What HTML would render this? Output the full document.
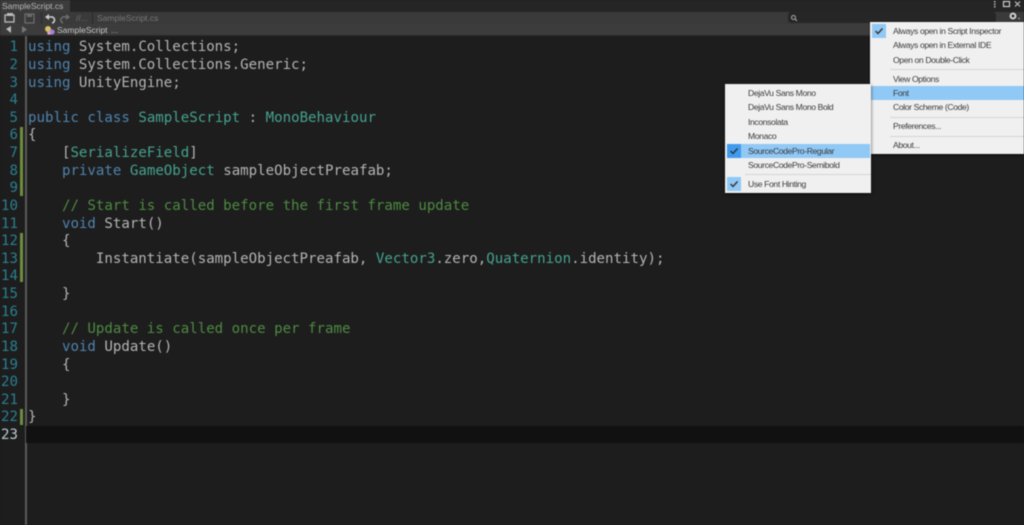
<!DOCTYPE html>
<html><head><meta charset="utf-8"><style>
html,body{margin:0;padding:0;background:#1d1d1d}
#r{position:relative;width:1024px;height:525px;overflow:hidden;background:#1d1d1d;font-family:"Liberation Sans",sans-serif;filter:blur(.4px)}
.a{position:absolute}
.l{position:absolute;left:28px;height:18px;font:14.1px/18px "DejaVu Sans Mono",monospace;white-space:pre;color:#b4b4b4;margin-top:1px}
.n{position:absolute;left:0;width:18px;text-align:right;font:14.1px/18px "DejaVu Sans Mono",monospace;color:#2a7f90;margin-top:1px}
.k{color:#4f83ae}.t{color:#45a28e}.c{color:#4d8a42}
.g{position:absolute;left:20px;width:3px;background:#6d8f3c}
.m{position:absolute;font-size:8.6px;letter-spacing:-.38px;line-height:14px;height:14px;color:#3a3a3a;white-space:pre}
.s{position:absolute;height:1px;background:#d4d4d4}
.h{position:absolute;background:#90c8f6}
.ck{position:absolute;width:14px;height:14px;background:#90c8f6}
</style></head><body><div id="r">
<div class="a" style="left:0;top:0;width:1024px;height:12px;background:#252525"></div>
<div class="a" style="left:0;top:0;width:70px;height:12px;background:#3c3c3c"></div>
<div class="a" style="left:2px;top:0;font-size:8.5px;line-height:12px;color:#b8b8b8">SampleScript.cs</div>
<div class="a" style="left:0;top:12px;width:1024px;height:12px;background:#3a3a3a"></div>
<div class="a" style="left:0;top:24px;width:870px;height:11px;background:#3c3c3c"></div>
<div class="a" style="left:0;top:35px;width:1024px;height:1px;background:#2a2a2a"></div>

<svg class="a" style="left:0;top:11px" width="130" height="25" viewBox="0 0 130 25">
<rect x="5" y="4" width="9" height="7" fill="none" stroke="#bbb" stroke-width="1.300"/><path d="M7 2h6v3H7z" fill="#bbb"/>
<rect x="25" y="3" width="9" height="9" fill="none" stroke="#6c6c6c" stroke-width="1.300"/><rect x="27" y="3" width="5" height="3" fill="#6c6c6c"/>
<path d="M46 6h5a3 3 0 0 1 1 6" fill="none" stroke="#ccc" stroke-width="1.600"/><path d="M45 6l4-3v6z" fill="#ccc"/>
<path d="M69 6h-4a3 3 0 0 0-2 6" fill="none" stroke="#6c6c6c" stroke-width="1.600"/><path d="M70 6l-4-3v6z" fill="#6c6c6c"/>
<path d="M6 18l5-3v7z" fill="#bbb"/><path d="M22 15l5 3.500-5 3.500z" fill="#777"/>
<circle cx="48" cy="18" r="3" fill="#d8c060"/><circle cx="52" cy="21" r="2.600" fill="#a080d8"/><circle cx="49" cy="22" r="1.800" fill="#e0a0c0"/>
</svg>
<div class="a" style="left:76px;top:12px;font-size:8.5px;line-height:12px;color:#707070">//...</div>
<div class="a" style="left:97px;top:12px;font-size:8.5px;line-height:12px;color:#777">SampleScript.cs</div>
<div class="a" style="left:57px;top:24px;font-size:8.5px;line-height:12px;color:#c4c4c4">SampleScript</div>
<div class="a" style="left:111px;top:24px;font-size:8.5px;line-height:12px;color:#aaa">...</div>
<div class="a" style="left:41px;top:12px;width:1px;height:12px;background:#2a2a2a"></div>
<div class="a" style="left:92px;top:12px;width:1px;height:12px;background:#2a2a2a"></div>

<div class="a" style="left:788px;top:12px;width:208px;height:11px;background:#262626;border-radius:3px"></div>
<svg class="a" style="left:790px;top:14px" width="8" height="8"><circle cx="3.500" cy="3.500" r="2" fill="none" stroke="#aaa"/><path d="M5 5l2 2" stroke="#aaa"/></svg>
<svg class="a" style="left:994px;top:0" width="30" height="24">
<rect x="0" y="1" width="1.500" height="1.500" fill="#bbb"/><rect x="0" y="3.500" width="1.500" height="1.500" fill="#bbb"/><rect x="0" y="6" width="1.500" height="1.500" fill="#bbb"/>
<rect x="9.500" y="1.500" width="6" height="5" fill="none" stroke="#ccc" stroke-width="1.200"/>
<path d="M21 1.500l5 5M26 1.500l-5 5" stroke="#bbb" stroke-width="1.200"/>
<circle cx="19" cy="16" r="2.500" fill="none" stroke="#ddd" stroke-width="1.800"/><path d="M24 18h2l-1 1.500z" fill="#ccc"/>
</svg>

<div class="a" style="left:25px;top:36px;width:1.500px;height:489px;background:#5a5a5a"></div>
<div class="a" style="left:26px;top:426px;width:998px;height:17px;background:#111"></div>

<div class="g" style="top:127px;height:69px"></div>
<div class="g" style="top:233px;height:49px"></div>
<div class="g" style="top:409px;height:16px"></div>

<div class="n" style="top:37px">1</div><div class="n" style="top:55px">2</div><div class="n" style="top:73px">3</div><div class="n" style="top:90px">4</div><div class="n" style="top:108px">5</div><div class="n" style="top:125px">6</div><div class="n" style="top:143px">7</div><div class="n" style="top:161px">8</div><div class="n" style="top:178px">9</div><div class="n" style="top:196px">10</div><div class="n" style="top:214px">11</div><div class="n" style="top:231px">12</div><div class="n" style="top:249px">13</div><div class="n" style="top:266px">14</div><div class="n" style="top:284px">15</div><div class="n" style="top:302px">16</div><div class="n" style="top:319px">17</div><div class="n" style="top:337px">18</div><div class="n" style="top:355px">19</div><div class="n" style="top:372px">20</div><div class="n" style="top:390px">21</div><div class="n" style="top:407px">22</div><div class="n" style="top:425px;color:#b8ccd4">23</div>

<div class="l" style="top:37px"><span class="k">using</span> System.Collections;</div>
<div class="l" style="top:55px"><span class="k">using</span> System.Collections.Generic;</div>
<div class="l" style="top:73px"><span class="k">using</span> UnityEngine;</div>
<div class="l" style="top:108px"><span class="k">public class</span> <span class="t">SampleScript</span> : <span class="t">MonoBehaviour</span></div>
<div class="l" style="top:125px">{</div>
<div class="l" style="top:143px">    [<span class="t">SerializeField</span>]</div>
<div class="l" style="top:161px">    <span class="k">private</span> <span class="t">GameObject</span> sampleObjectPreafab;</div>
<div class="l" style="top:196px">    <span class="c">// Start is called before the first frame update</span></div>
<div class="l" style="top:214px">    <span class="k">void</span> Start()</div>
<div class="l" style="top:231px">    {</div>
<div class="l" style="top:249px">        Instantiate(sampleObjectPreafab, <span class="t">Vector3</span>.zero,<span class="t">Quaternion</span>.identity);</div>
<div class="l" style="top:284px">    }</div>
<div class="l" style="top:319px">    <span class="c">// Update is called once per frame</span></div>
<div class="l" style="top:337px">    <span class="k">void</span> Update()</div>
<div class="l" style="top:355px">    {</div>
<div class="l" style="top:390px">    }</div>
<div class="l" style="top:407px">}</div>

<!-- main menu -->
<div class="a" style="left:870px;top:22px;width:154px;height:132px;background:#f0f0f0;box-shadow:0 1px 2px rgba(0,0,0,.6)"></div>
<div class="ck" style="left:872px;top:24px"></div>
<svg class="a" style="left:872px;top:24px" width="14" height="14"><path d="M3.500 7l2.500 2.500 4.500-5" fill="none" stroke="#333" stroke-width="1.400"/></svg>
<div class="m" style="left:893px;top:24px">Always open in Script Inspector</div>
<div class="m" style="left:893px;top:38px">Always open in External IDE</div>
<div class="m" style="left:893px;top:53px">Open on Double-Click</div>
<div class="s" style="left:890px;top:69px;width:134px"></div>
<div class="m" style="left:893px;top:72px">View Options</div>
<div class="h" style="left:871px;top:86px;width:153px;height:14px"></div>
<div class="m" style="left:893px;top:86px">Font</div>
<div class="m" style="left:893px;top:100px">Color Scheme (Code)</div>
<div class="s" style="left:890px;top:117px;width:134px"></div>
<div class="m" style="left:893px;top:119px">Preferences...</div>
<div class="s" style="left:890px;top:136px;width:134px"></div>
<div class="m" style="left:893px;top:138px">About...</div>

<!-- sub menu -->
<div class="a" style="left:725px;top:84px;width:146px;height:109px;background:#f0f0f0;box-shadow:0 1px 3px rgba(0,0,0,.7)"></div>
<div class="m" style="left:748px;top:86px">DejaVu Sans Mono</div>
<div class="m" style="left:748px;top:100px">DejaVu Sans Mono Bold</div>
<div class="m" style="left:748px;top:115px">Inconsolata</div>
<div class="m" style="left:748px;top:129px">Monaco</div>
<div class="h" style="left:727px;top:144px;width:143px;height:14px"></div>
<div class="a" style="left:727px;top:144px;width:14px;height:14px;background:#3f9bee"></div>
<svg class="a" style="left:727px;top:144px" width="14" height="14"><path d="M3.500 7l2.500 2.500 4.500-5" fill="none" stroke="#333" stroke-width="1.400"/></svg>
<div class="m" style="left:748px;top:144px">SourceCodePro-Regular</div>
<div class="m" style="left:748px;top:158px">SourceCodePro-Semibold</div>
<div class="s" style="left:745px;top:174px;width:126px"></div>
<div class="ck" style="left:727px;top:177px"></div>
<svg class="a" style="left:727px;top:177px" width="14" height="14"><path d="M3.500 7l2.500 2.500 4.500-5" fill="none" stroke="#333" stroke-width="1.400"/></svg>
<div class="m" style="left:748px;top:177px">Use Font Hinting</div>
</div></body></html>
